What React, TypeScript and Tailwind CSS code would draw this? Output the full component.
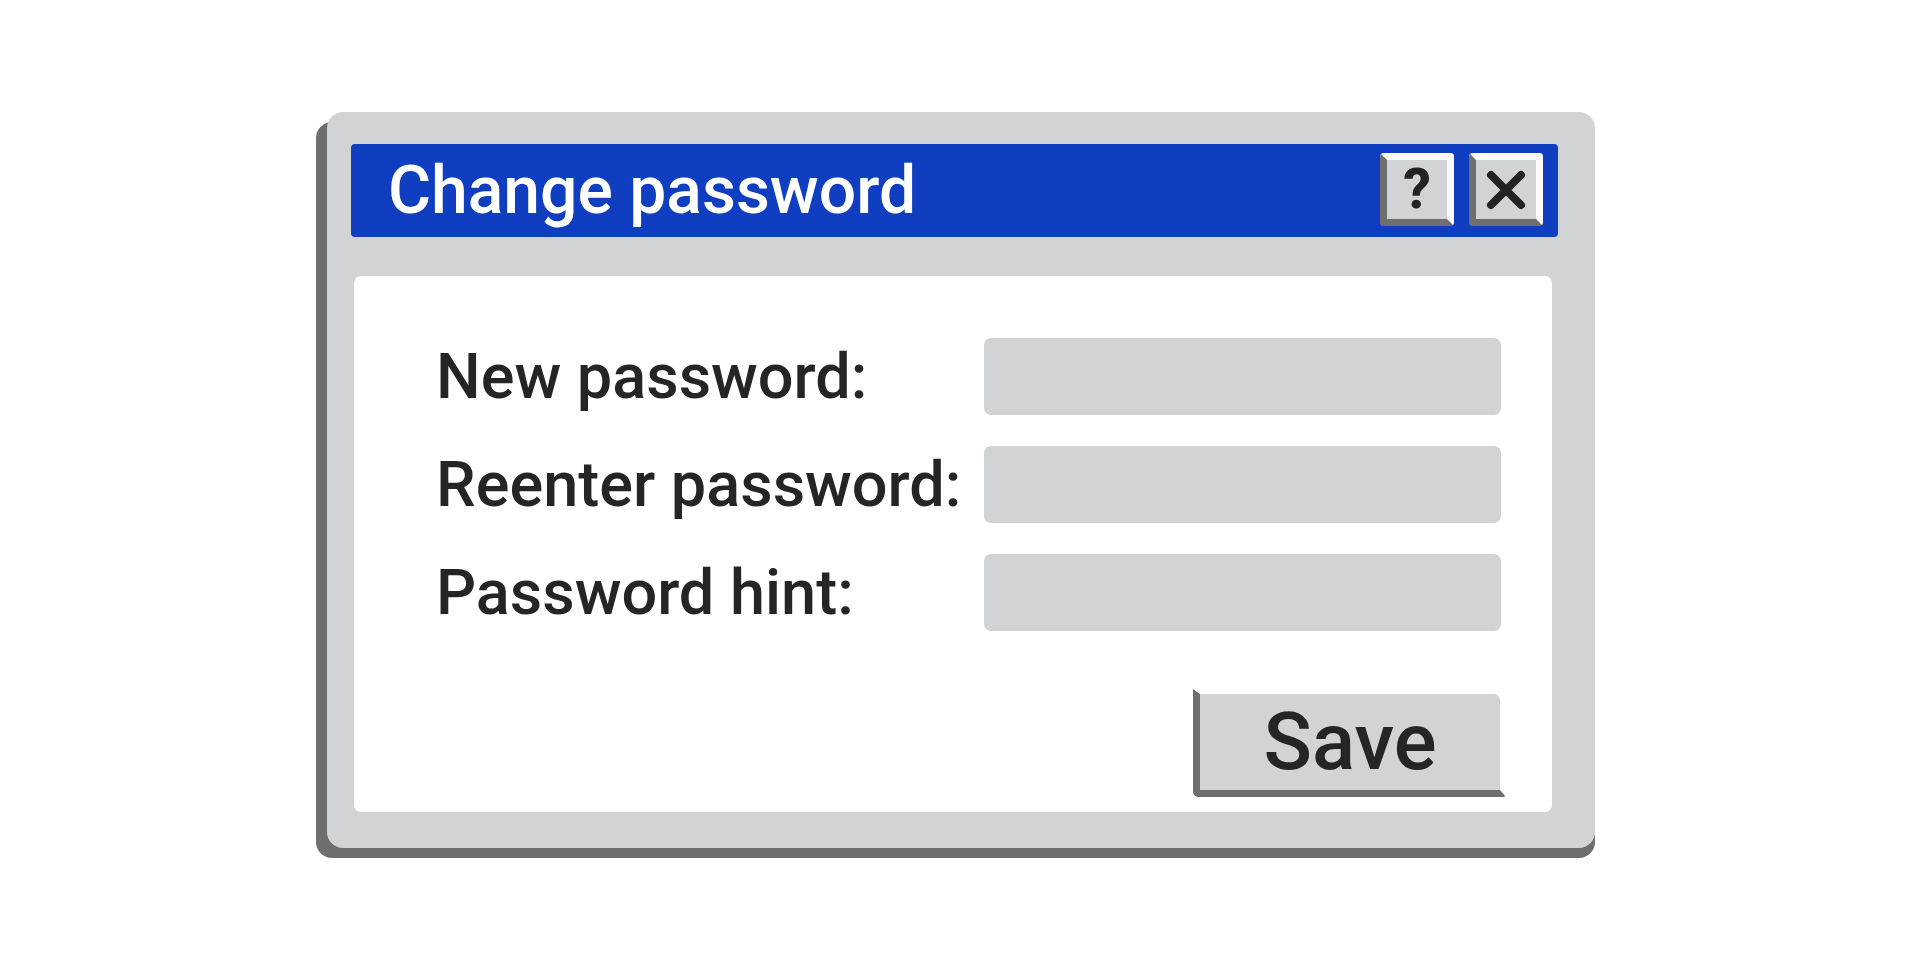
import React from "react";

function TitleButton({ children }: { children: React.ReactNode }) {
  return (
    <div className="w-[74px] h-[73px] rounded-[4px] border-[7px] border-t-[#fbfbfb] border-r-[#fbfbfb] border-l-[#6f6f6f] border-b-[#6f6f6f] bg-[#d2d3d5] flex items-center justify-center">
      {children}
    </div>
  );
}

function Row({ label }: { label: string }) {
  return (
    <div className="flex items-center justify-between h-[77px]">
      <span className="text-[63px] font-medium leading-none text-[#252525]">{label}</span>
      <div className="w-[517px] h-[77px] rounded-[7px] bg-[#d2d3d5]" />
    </div>
  );
}

export default function App() {
  return (
    <div
      className="w-full h-screen bg-white flex items-center justify-center"
      style={{ fontFamily: "Roboto, 'Noto Sans', 'Liberation Sans', sans-serif" }}
    >
      <div className="w-[1268px] h-[736px] ml-[2px] bg-[#d2d3d5] rounded-[16px] shadow-[-11px_10px_0_0_#6e6e6e,-5px_10px_0_0_#6e6e6e,0px_10px_0_0_#6e6e6e] pt-[32px] flex flex-col">
        <div className="ml-[24px] w-[1207px] h-[93px] bg-[#0f3fc0] rounded-[4px] flex items-center pl-[37px] pr-[15px]">
          <span className="text-white text-[66px] font-medium leading-none">Change password</span>
          <div className="ml-auto flex items-center gap-[15px] mb-[2px]">
            <TitleButton>
              <span className="text-[#232323] text-[55px] font-extrabold leading-none">?</span>
            </TitleButton>
            <TitleButton>
              <svg width="42" height="42" viewBox="0 0 42 42">
                <path d="M6 6 L36 36 M36 6 L6 36" stroke="#232323" strokeWidth="8" strokeLinecap="round" fill="none" />
              </svg>
            </TitleButton>
          </div>
        </div>
        <div className="ml-[27px] mt-[39px] w-[1198px] h-[536px] bg-white rounded-[7px] pl-[82px] pr-[51px] pt-[62px] flex flex-col">
          <div className="flex flex-col gap-[31px]">
            <Row label="New password:" />
            <Row label="Reenter password:" />
            <Row label="Password hint:" />
          </div>
          <div className="flex justify-end mt-[58px] mr-[-5px]">
            <div className="border-l-[7px] border-b-[7px] border-t-[5px] border-r-[6px] border-l-[#6e6e6e] border-b-[#6e6e6e] border-t-transparent border-r-transparent rounded-bl-[6px] rounded-br-[3px]">
              <div className="w-[300px] h-[96px] bg-[#d2d3d5] rounded-tr-[6px] flex items-center justify-center">
                <span className="text-[80px] font-medium leading-none text-[#252525]">Save</span>
              </div>
            </div>
          </div>
        </div>
      </div>
    </div>
  );
}
